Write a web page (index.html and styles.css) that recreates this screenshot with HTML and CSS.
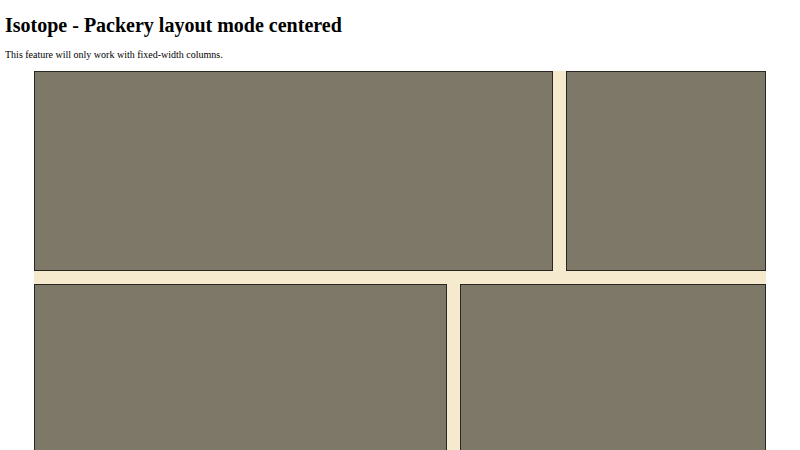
FILE: index.html
```html
<!DOCTYPE html>
<html>
<head>
<meta charset="utf-8">
<title>Isotope - Packery layout mode centered</title>
<link rel="stylesheet" href="styles.css">
</head>
<body>
<h1 class="title">Isotope - Packery layout mode centered</h1>
<p class="note">This feature will only work with fixed-width columns.</p>
<div class="grid">
  <div class="item w519"></div>
  <div class="item w200"></div>
  <div class="item w413"></div>
  <div class="item w306"></div>
</div>
</body>
</html>
```
FILE: styles.css
```css
body {
  margin: 5px;
  font-family: "Liberation Serif", "Times New Roman", serif;
  color: #000;
  background: #fff;
}
.title {
  font-size: 20px;
  font-weight: bold;
  margin: 8px 0 12px;
  line-height: 24px;
}
.note {
  font-size: 10px;
  line-height: 12px;
  margin: 0 0 10px;
}
.grid {
  width: 732px;
  margin: 0 auto;
  background: #f5eacd;
  display: flex;
  flex-wrap: wrap;
  gap: 13px;
}
.item {
  box-sizing: border-box;
  height: 200px;
  background: #7d7867;
  border: 1px solid #2a2720;
}
.w519 { width: 519px; }
.w200 { width: 200px; }
.w413 { width: 413px; }
.w306 { width: 306px; }
```
